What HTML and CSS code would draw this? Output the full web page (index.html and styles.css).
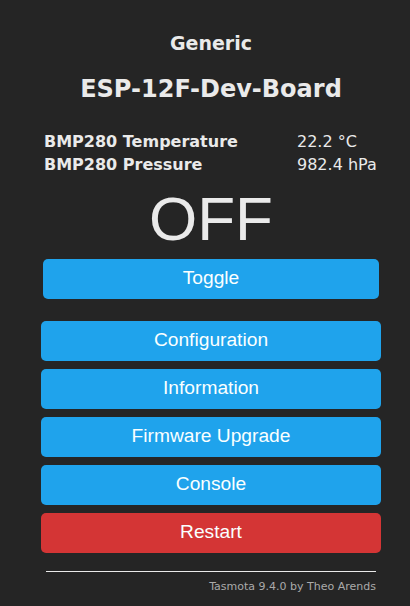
FILE: index.html
```html
<!DOCTYPE html>
<html>
<head>
<meta charset="utf-8">
<link rel="stylesheet" href="styles.css">
</head>
<body>
<div class="page">
  <h3 class="module">Generic</h3>
  <h2 class="device">ESP-12F-Dev-Board</h2>
  <div class="sensors">
    <div class="label">BMP280 Temperature</div><div class="value">22.2 °C</div>
    <div class="label">BMP280 Pressure</div><div class="value">982.4 hPa</div>
  </div>
  <div class="state">OFF</div>
  <div class="toggle-wrap"><button class="btn">Toggle</button></div>
  <div class="menu">
    <button class="btn">Configuration</button>
    <button class="btn">Information</button>
    <button class="btn">Firmware Upgrade</button>
    <button class="btn">Console</button>
    <button class="btn btn-red">Restart</button>
  </div>
  <hr class="rule">
  <div class="footer">Tasmota 9.4.0 by Theo Arends</div>
</div>
</body>
</html>
```
FILE: styles.css
```css
html, body {
  margin: 0;
  padding: 0;
  background: #252525;
}
body {
  color: #eaeaea;
  font-family: "DejaVu Sans", Verdana, sans-serif;
  height: 606px;
  overflow: hidden;
}
.page {
  width: 340px;
  margin-left: 41px;
  padding-top: 31px;
}
.module {
  margin: 0;
  font-size: 19px;
  line-height: 24px;
  font-weight: bold;
  text-align: center;
}
.device {
  margin: 19px 0 0;
  font-size: 24px;
  line-height: 30px;
  font-weight: bold;
  text-align: center;
}
.sensors {
  margin: 26px 0 0 3px;
  display: grid;
  grid-template-columns: 253px 1fr;
  font-size: 16px;
  line-height: 23px;
}
.label {
  font-weight: bold;
}
.state {
  margin-top: 8px;
  font-family: "Liberation Sans", Arial, sans-serif;
  font-size: 62px;
  line-height: 70px;
  text-align: center;
}
.toggle-wrap {
  margin-top: 5px;
  padding: 0 2px;
}
.btn {
  display: block;
  width: 100%;
  height: 40px;
  border: 0;
  border-radius: 5px;
  background: #1fa3ec;
  color: #faffff;
  font-family: "Liberation Sans", Arial, sans-serif;
  font-size: 19.2px;
  line-height: 38px;
  padding: 0 0 2px;
  text-align: center;
}
.btn-red {
  background: #d43535;
}
.menu {
  margin-top: 22px;
  display: flex;
  flex-direction: column;
  gap: 8px;
}
.rule {
  margin: 18px 5px 0;
  border: 0;
  border-top: 1px solid #eaeaea;
  height: 0;
}
.footer {
  margin-top: 8px;
  padding-right: 5px;
  text-align: right;
  font-size: 11px;
  line-height: 13px;
  color: #aaa;
}
```
